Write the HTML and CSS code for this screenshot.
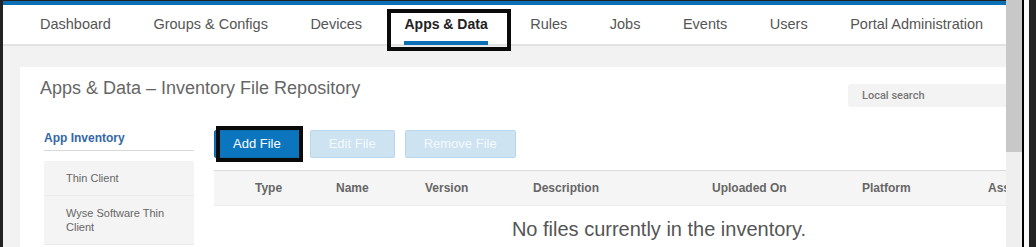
FILE: index.html
```html
<!DOCTYPE html>
<html lang="en">
  <head>
    <meta charset="UTF-8" />
    <title>Apps &amp; Data - Inventory File Repository</title>
    <meta name="viewport" content="width=device-width, initial-scale=1.0" />
    <link rel="stylesheet" href="styles.css">
  </head>
  <body>
    <div class="screen">
      <div class="page">
        <nav class="topnav">
          <a class="nav-item">Dashboard</a>
          <a class="nav-item">Groups &amp; Configs</a>
          <a class="nav-item">Devices</a>
          <a class="nav-item active">Apps &amp; Data</a>
          <a class="nav-item">Rules</a>
          <a class="nav-item">Jobs</a>
          <a class="nav-item">Events</a>
          <a class="nav-item">Users</a>
          <a class="nav-item">Portal Administration</a>
        </nav>

        <div class="panel">
          <div class="panel-head">
            <h1>Apps &amp; Data – Inventory File Repository</h1>
            <input type="text" class="search" placeholder="Local search">
          </div>

          <div class="panel-body">
            <aside class="sidebar">
              <div class="side-title">App Inventory</div>
              <div class="side-item">Thin Client</div>
              <div class="side-item">Wyse Software Thin Client</div>
            </aside>

            <section class="main">
              <div class="toolbar">
                <span class="callout"><button class="btn btn-primary">Add File</button></span>
                <button class="btn btn-disabled">Edit File</button>
                <button class="btn btn-disabled">Remove File</button>
              </div>

              <div class="table">
                <div class="thead">
                  <span>Type</span>
                  <span>Name</span>
                  <span>Version</span>
                  <span>Description</span>
                  <span>Uploaded On</span>
                  <span>Platform</span>
                  <span>Assigned</span>
                </div>
                <div class="empty">No files currently in the inventory.</div>
              </div>
            </section>
          </div>
        </div>
      </div>

      <div class="scrollbar"><div class="thumb"></div></div>
      <div class="edge"></div>
    </div>
  </body>
</html>
```

FILE: styles.css
```css
* {
  box-sizing: border-box;
  font-family: "Liberation Sans", Arial, sans-serif;
}
body {
  margin: 0;
  background: #222;
  overflow: hidden;
}
.screen {
  display: flex;
  height: 247px;
  margin-left: 3px;
  width: 1026px;
}
.page {
  width: 1003px;
  overflow: hidden;
  background: #f2f2f2;
  border-top: 1px solid #222;
}
.scrollbar {
  width: 16px;
  background: #efefef;
}
.thumb {
  height: 152px;
  background: #c8c8c8;
}
.edge {
  width: 7px;
  background: #fafafa;
  border-left: 2px solid #000;
}

/* top navigation */
.topnav {
  display: flex;
  gap: 42.5px;
  height: 45px;
  padding-left: 37px;
  background: #fff;
  border-top: 4px solid #0b70b6;
  border-bottom: 2px solid #e3e3e3;
}
.nav-item {
  position: relative;
  font-size: 14.5px;
  line-height: 39px;
  color: #555;
  white-space: nowrap;
}
.nav-item.active {
  font-weight: bold;
  font-size: 14px;
  color: #222;
}
.nav-item.active:after {
  content: "";
  position: absolute;
  left: 0;
  right: 0;
  bottom: -1px;
  height: 4px;
  background: #0b70b6;
}
.nav-item.active:before {
  content: "";
  position: absolute;
  left: -17px;
  right: -23px;
  top: 4px;
  bottom: -7px;
  border: 4px solid #0a0a0a;
  z-index: 2;
}

/* panel */
.panel {
  width: 1104px;
  min-height: 200px;
  margin: 21px 0 0 17px;
  padding: 10px 20px 0 20px;
  background: #fff;
}
.panel-head {
  display: flex;
  justify-content: space-between;
  align-items: flex-start;
}
h1 {
  margin: 0;
  font-size: 18px;
  font-weight: normal;
  line-height: 22px;
  color: #666;
}
.search {
  margin-top: 7px;
  width: 256px;
  height: 23px;
  padding: 0 14px;
  border: none;
  border-radius: 3px;
  background: #f3f3f3;
  font-family: Roboto, sans-serif;
  font-size: 11px;
  font-weight: 500;
}
.search::placeholder {
  color: #777;
}
.panel-body {
  display: flex;
  gap: 20px;
  margin-top: 22px;
  padding-left: 4px;
}

/* sidebar */
.sidebar {
  width: 150px;
  flex-shrink: 0;
}
.side-title {
  font-size: 12px;
  font-weight: bold;
  line-height: 18px;
  color: #3567a6;
  padding-bottom: 3px;
  border-bottom: 1px solid #d9d9d9;
  margin-bottom: 10px;
}
.side-item {
  background: #f4f4f4;
  padding: 10px 22px;
  font-size: 11px;
  line-height: 14px;
  color: #666;
  border-bottom: 1px solid #eaeaea;
}

/* main */
.main {
  flex: 1;
}
.toolbar {
  display: flex;
  gap: 10px;
  margin-top: 1px;
}
.callout {
  position: relative;
  display: inline-flex;
}
.callout:after {
  content: "";
  position: absolute;
  left: 2px;
  top: -4px;
  right: -3px;
  bottom: -4px;
  border: 4px solid #0a0a0a;
}
.btn {
  height: 28px;
  padding: 0 18px;
  font-size: 13px;
  line-height: 26px;
  border-radius: 2px;
  color: #fff;
}
.btn-primary {
  background: #0b76bd;
  border: 1px solid #0b6aab;
}
.btn-disabled {
  background: #cde3f2;
  border: 1px solid #b7d7ee;
  color: #f4f9fd;
}
.table {
  margin-top: 12px;
  border-top: 1px solid #dcdcdc;
}
.thead {
  display: grid;
  grid-template-columns: 81px 89px 108px 179px 150px 126px auto;
  padding-left: 41px;
  height: 35px;
  line-height: 34px;
  background: #f5f5f5;
  border-bottom: 1px solid #ececec;
  font-size: 12px;
  font-weight: bold;
  color: #666;
  white-space: nowrap;
}
.empty {
  text-align: center;
  padding-top: 11px;
  font-size: 20px;
  line-height: 24px;
  color: #555;
}
```
